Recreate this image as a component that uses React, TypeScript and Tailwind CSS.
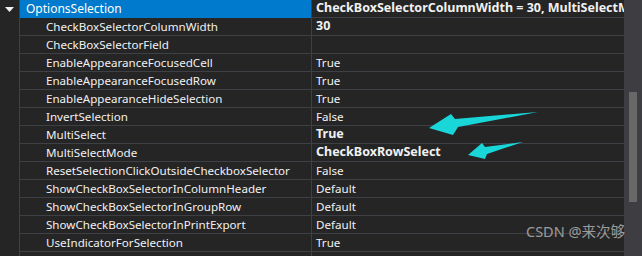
const rows: { name: string; value: string; bold?: boolean }[] = [
  { name: "CheckBoxSelectorColumnWidth", value: "30", bold: true },
  { name: "CheckBoxSelectorField", value: "" },
  { name: "EnableAppearanceFocusedCell", value: "True" },
  { name: "EnableAppearanceFocusedRow", value: "True" },
  { name: "EnableAppearanceHideSelection", value: "True" },
  { name: "InvertSelection", value: "False" },
  { name: "MultiSelect", value: "True", bold: true },
  { name: "MultiSelectMode", value: "CheckBoxRowSelect", bold: true },
  { name: "ResetSelectionClickOutsideCheckboxSelector", value: "False" },
  { name: "ShowCheckBoxSelectorInColumnHeader", value: "Default" },
  { name: "ShowCheckBoxSelectorInGroupRow", value: "Default" },
  { name: "ShowCheckBoxSelectorInPrintExport", value: "Default" },
  { name: "UseIndicatorForSelection", value: "True" },
  { name: "", value: "" },
];

export default function App() {
  return (
    <div
      className="relative flex h-[256px] w-[642px] overflow-hidden bg-[#252526] text-[11.6px] text-[#f1f1f1]"
      style={{ fontFamily: '"Noto Sans", "Open Sans", sans-serif' }}
    >
      <div className="flex w-[624px] flex-col">
        {/* category row */}
        <div className="flex h-[18px] shrink-0">
          <div className="flex w-[20px] items-center justify-center border-r border-[#3f3f46]">
            <svg width="9" height="5" viewBox="0 0 9 5">
              <path d="M0 0 L9 0 L4.5 5 Z" fill="#f1f1f1" />
            </svg>
          </div>
          <div className="flex w-[291px] items-center bg-[#007acc] pl-[6px] text-[12px] leading-none text-white">
            OptionsSelection
          </div>
          <div className="flex flex-1 items-center overflow-hidden whitespace-nowrap border-b border-l border-[#3f3f46] pl-[4px] text-[12.5px] font-bold leading-none">
            CheckBoxSelectorColumnWidth = 30, MultiSelectMode = CheckBoxRowSelect
          </div>
        </div>
        {rows.map((r, i) => (
          <div key={i} className="flex h-[18px] shrink-0">
            <div className="w-[20px] border-r border-[#3f3f46]" />
            <div className="flex w-[291px] items-center border-b border-[#3f3f46] pl-[26px] leading-none">
              {r.name}
            </div>
            <div
              className={`flex flex-1 items-center border-b border-l border-[#3f3f46] pl-[4px] leading-none ${
                r.bold ? "text-[12.5px] font-bold" : ""
              }`}
            >
              {r.value}
            </div>
          </div>
        ))}
      </div>
      {/* scrollbar */}
      <div className="flex w-[18px] justify-center bg-[#3e3e42] pt-[92px]">
        <div className="h-[110px] w-[8px] bg-[#686868]" />
      </div>

      {/* annotation arrows */}
      <svg className="pointer-events-none absolute left-0 top-0" width="642" height="256">
        <path
          d="M429 128 L451 114 L455 119 L538 112 L458 127 L453 135 Z"
          fill="#19d6d9"
        />
        <path
          d="M468 155 L482 143 L485 147 L523 142 L487 154 L485 159 Z"
          fill="#19d6d9"
        />
      </svg>

      <div
        className="pointer-events-none absolute left-[526px] top-[224px] text-[14.5px] leading-none text-[#9c9c9c]"
        style={{ fontFamily: '"Noto Sans", "Noto Sans CJK SC", sans-serif' }}
      >
        CSDN @来次够
      </div>
    </div>
  );
}
